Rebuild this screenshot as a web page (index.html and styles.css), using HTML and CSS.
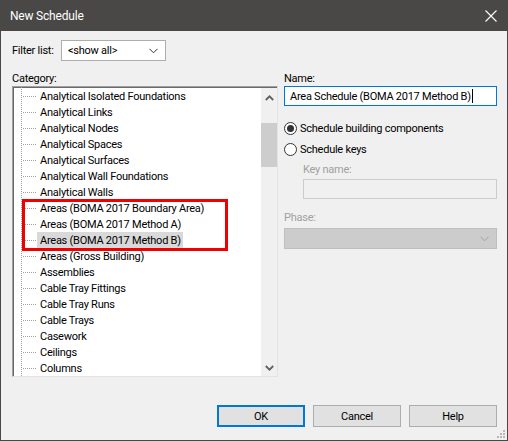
FILE: index.html
```html
<!DOCTYPE html>
<html>
<head>
<meta charset="utf-8">
<link rel="stylesheet" href="styles.css">
</head>
<body>
<div class="window">
  <div class="titlebar">
    <span class="title">New Schedule</span>
    <svg class="close" width="12" height="12" viewBox="0 0 12 12"><path d="M0.5 0.5 L11.5 11.5 M11.5 0.5 L0.5 11.5" stroke="#fff" stroke-width="1.1" fill="none"/></svg>
  </div>
  <div class="content">
    <div class="filter-row">
      <span class="label">Filter list:</span>
      <div class="select">
        <span>&lt;show all&gt;</span>
        <svg width="9" height="6" viewBox="0 0 9 6"><path d="M0.5 0.8 L4.5 4.8 L8.5 0.8" stroke="#333" stroke-width="1" fill="none"/></svg>
      </div>
    </div>
    <div class="main">
      <div class="left">
        <div class="label cap">Category:</div>
        <div class="listbox">
          <div class="tree">
            <div class="row"><span>Analytical Isolated Foundations</span></div>
            <div class="row"><span>Analytical Links</span></div>
            <div class="row"><span>Analytical Nodes</span></div>
            <div class="row"><span>Analytical Spaces</span></div>
            <div class="row"><span>Analytical Surfaces</span></div>
            <div class="row"><span>Analytical Wall Foundations</span></div>
            <div class="row"><span>Analytical Walls</span></div>
            <div class="row"><span>Areas (BOMA 2017 Boundary Area)</span></div>
            <div class="row"><span>Areas (BOMA 2017 Method A)</span></div>
            <div class="row sel"><span>Areas (BOMA 2017 Method B)</span></div>
            <div class="row"><span>Areas (Gross Building)</span></div>
            <div class="row"><span>Assemblies</span></div>
            <div class="row"><span>Cable Tray Fittings</span></div>
            <div class="row"><span>Cable Tray Runs</span></div>
            <div class="row"><span>Cable Trays</span></div>
            <div class="row"><span>Casework</span></div>
            <div class="row"><span>Ceilings</span></div>
            <div class="row"><span>Columns</span></div>
          </div>
          <div class="scrollbar">
            <svg class="arrow" width="9" height="6" viewBox="0 0 9 6"><path d="M0.8 5 L4.5 1.3 L8.2 5" stroke="#606060" stroke-width="1.8" fill="none"/></svg>
            <div class="track"><div class="thumb"></div></div>
            <svg class="arrow" width="9" height="6" viewBox="0 0 9 6"><path d="M0.8 1 L4.5 4.7 L8.2 1" stroke="#606060" stroke-width="1.8" fill="none"/></svg>
          </div>
          <div class="highlight"></div>
        </div>
      </div>
      <div class="right">
        <div class="label cap">Name:</div>
        <div class="input active"><span>Area Schedule (BOMA 2017 Method B)</span><span class="caret"></span></div>
        <div class="radio-row first"><span class="radio checked"></span><span>Schedule building components</span></div>
        <div class="radio-row"><span class="radio"></span><span>Schedule keys</span></div>
        <div class="indent">
          <div class="label disabled">Key name:</div>
          <div class="input disabled-input"></div>
        </div>
        <div class="label disabled phase-label">Phase:</div>
        <div class="select disabled-select">
          <span></span>
          <svg width="9" height="6" viewBox="0 0 9 6"><path d="M0.5 0.8 L4.5 4.8 L8.5 0.8" stroke="#a0a0a0" stroke-width="1" fill="none"/></svg>
        </div>
      </div>
    </div>
    <div class="buttons">
      <div class="btn default">OK</div>
      <div class="btn">Cancel</div>
      <div class="btn">Help</div>
    </div>
  </div>
  <svg class="grip" width="8" height="8" viewBox="0 0 8 8">
    <rect x="6" y="0" width="2" height="2" fill="#b8b8b8"/>
    <rect x="3" y="3" width="2" height="2" fill="#b8b8b8"/>
    <rect x="6" y="3" width="2" height="2" fill="#b8b8b8"/>
    <rect x="0" y="6" width="2" height="2" fill="#b8b8b8"/>
    <rect x="3" y="6" width="2" height="2" fill="#b8b8b8"/>
    <rect x="6" y="6" width="2" height="2" fill="#b8b8b8"/>
  </svg>
</div>
</body>
</html>
```
FILE: styles.css
```css
* { box-sizing: border-box; }
html, body { margin: 0; padding: 0; }
body {
  width: 508px;
  height: 441px;
  overflow: hidden;
  font-family: Roboto, "Noto Sans", sans-serif;
  font-size: 11px;
  letter-spacing: -0.25px;
  color: #000;
  background: #f0f0f0;
}
.window {
  position: relative;
  width: 508px;
  height: 441px;
  background: #f0f0f0;
  border: 1px solid #4a4846;
  border-top: none;
}
.titlebar {
  height: 31px;
  margin: 0 -1px;
  background: #4a4846;
  color: #fff;
  display: flex;
  align-items: center;
  justify-content: space-between;
  padding: 1px 10px 0 10px;
  font-size: 12px;
  letter-spacing: -0.2px;
}
.close { margin-right: 1px; margin-bottom: 1px; }
.content {
  padding: 9px 10px 0 11px;
}
.filter-row {
  display: flex;
  align-items: center;
  height: 21px;
}
.filter-row .label { width: 49px; }
.select {
  width: 105px;
  height: 21px;
  background: #fff;
  border: 1px solid #adadad;
  display: flex;
  align-items: center;
  justify-content: space-between;
  padding: 0 7px 0 6px;
}
.main {
  display: grid;
  grid-template-columns: 266px 213px;
  column-gap: 6px;
  margin-top: 9px;
}
.cap { height: 16px; line-height: 17px; }
.listbox {
  position: relative;
  height: 291px;
  display: flex;
  border-top: 1px solid #a0a0a0;
  border-left: 1px solid #a0a0a0;
  border-right: 1px solid #e3e3e3;
  border-bottom: 1px solid #e3e3e3;
  box-shadow: inset 1px 1px 0 #696969;
  background: #fff;
}
.tree {
  flex: 1;
  padding-top: 1px;
  padding-left: 1px;
  background: linear-gradient(#a0a0a0 50%, transparent 50%) 8px 0 / 1px 2px repeat-y;
}
.row {
  height: 16px;
  display: flex;
  align-items: center;
  padding-left: 9px;
  white-space: nowrap;
}
.row::before {
  content: "";
  width: 14px;
  height: 1px;
  background: linear-gradient(90deg, #a0a0a0 50%, transparent 50%) 0 0 / 2px 1px repeat-x;
}
.row span {
  padding: 2px 2px 0 3px;
  line-height: 14px;
  height: 16px;
}
.row.sel span { background: #d9d9d9; }
.scrollbar {
  width: 16px;
  margin-top: 1px;
  background: #f0f0f0;
  display: flex;
  flex-direction: column;
  align-items: center;
}
.arrow { margin: 7px 0 6px; flex: none; }
.track { flex: 1; width: 100%; padding-top: 16px; }
.thumb { width: 100%; height: 44px; background: #cdcdcd; }
.scrollbar .arrow:last-child { margin: 4px 0 5px; }
.highlight {
  position: absolute;
  left: 9px;
  top: 112px;
  width: 206px;
  height: 52px;
  border: 3px solid #f00000;
  pointer-events: none;
}
.right { display: flex; flex-direction: column; }
.input {
  height: 20px;
  border: 1px solid #cccccc;
  display: flex;
  align-items: center;
  padding-left: 5px;
  white-space: nowrap;
}
.input.active { border-color: #0078d7; background: #fff; }
.caret { width: 1px; height: 14px; background: #000; margin-left: 1px; }
.radio-row {
  display: flex;
  align-items: center;
  height: 21px;
  gap: 3px;
}
.radio-row.first { margin-top: 12px; }
.radio {
  width: 13px;
  height: 13px;
  border: 1px solid #333;
  border-radius: 50%;
  background: #fff;
  display: flex;
  align-items: center;
  justify-content: center;
}
.radio.checked::after {
  content: "";
  width: 7px;
  height: 7px;
  border-radius: 50%;
  background: #333;
}
.indent { padding-left: 19px; margin-top: 1px; }
.disabled { color: #a0a0a0; height: 17px; line-height: 18px; }
.disabled-input { height: 20px; background: #f0f0f0; border-color: #cccccc; margin-top: 1px; }
.phase-label { margin-top: 10px; }
.disabled-select {
  width: 213px;
  height: 21px;
  margin-top: 2px;
  background: #cccccc;
  border-color: #bfbfbf;
}
.buttons {
  display: flex;
  justify-content: flex-end;
  gap: 8px;
  margin-top: 28px;
  padding-right: 0px;
}
.btn {
  width: 88px;
  height: 22px;
  border: 1px solid #adadad;
  background: #e1e1e1;
  display: flex;
  align-items: center;
  justify-content: center;
}
.btn.default { border: 2px solid #0078d7; }
.grip { position: absolute; right: 2px; bottom: 2px; }
```
